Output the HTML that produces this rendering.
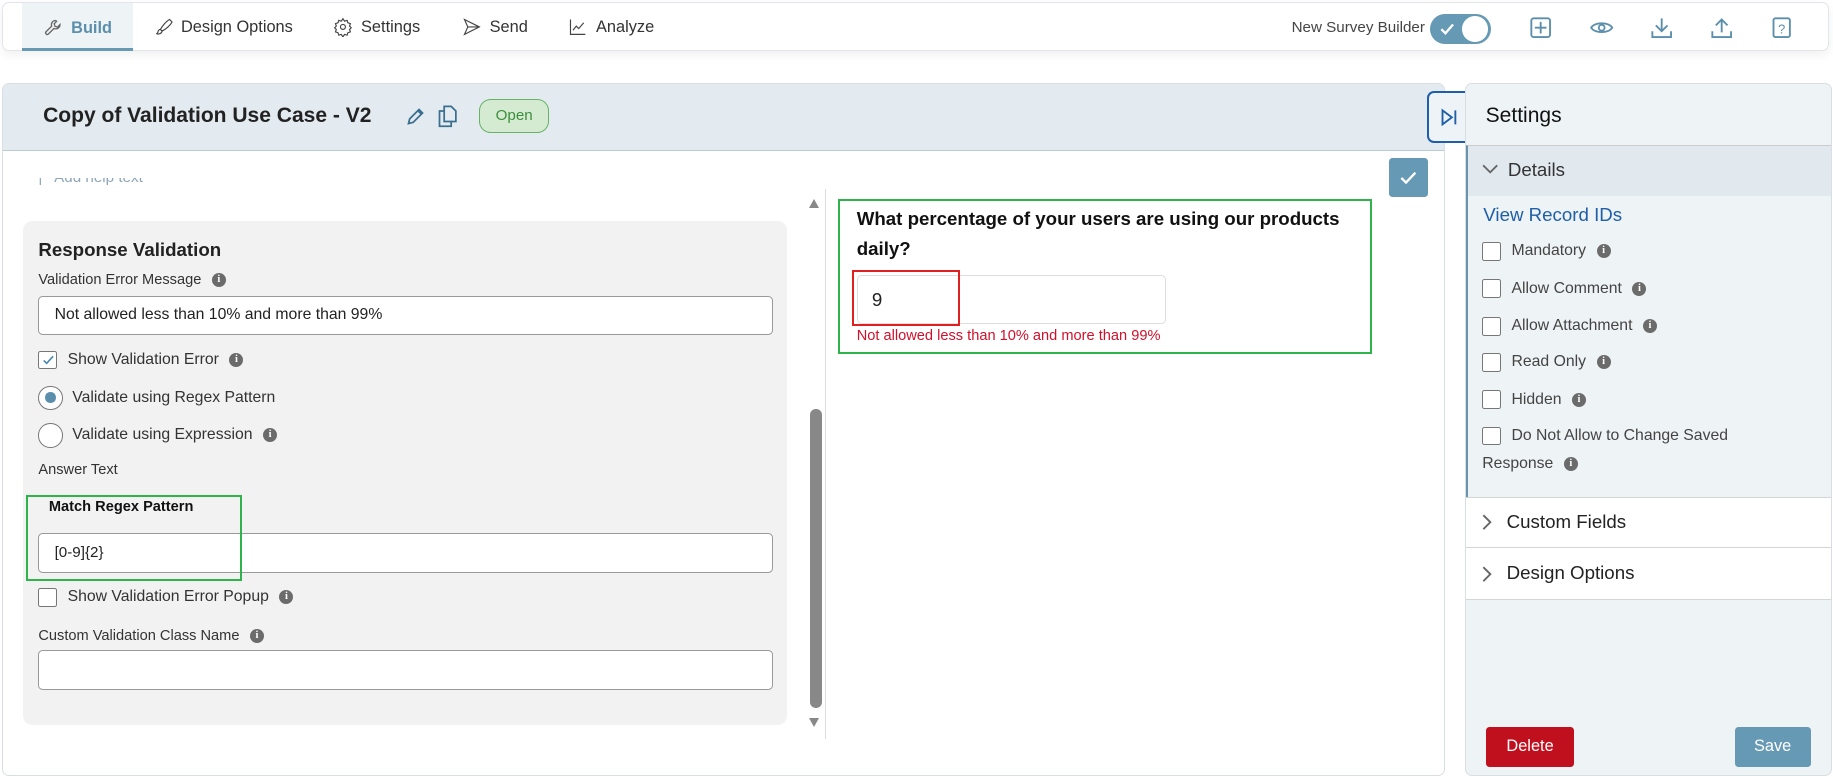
<!DOCTYPE html>
<html><head><meta charset="utf-8"><style>
*{box-sizing:border-box;margin:0;padding:0}
html,body{width:1833px;height:777px;overflow:hidden;background:#fff}
#w{zoom:1.16901;width:1568px;height:665px;position:relative;font-family:"Liberation Sans",sans-serif;color:#222}
.a{position:absolute}
.nav{left:2px;top:2px;width:1563px;height:42px;border:1px solid #e2e5ea;border-radius:6px;background:#fff;box-shadow:0 3px 8px rgba(0,0,0,.06)}
.tab{position:absolute;top:0;height:41px;display:flex;align-items:center;font-size:14px;color:#333;gap:7px}
.tab svg{width:17px;height:17px}
.ic{position:absolute;top:11px;width:20px;height:20px}
.info{display:inline-block;width:12px;height:12px;border-radius:50%;background:#6b6b6b;color:#fff;font-size:9px;font-weight:bold;text-align:center;line-height:12px;margin-left:9px;vertical-align:middle;font-family:"Liberation Serif",serif}
.cb{display:inline-block;width:16px;height:16px;border:1px solid #777;border-radius:2px;background:#fff;vertical-align:middle;margin-right:9px}
.inp{position:absolute;background:#fff;border:1px solid #999;border-radius:4px;font-size:13.5px;padding-left:13px;display:flex;align-items:center}
.lbl{position:absolute;font-size:12.5px;color:#333;display:flex;align-items:center}
.srow{position:absolute;left:1268px;font-size:13.5px;color:#444;display:flex;align-items:center}
</style></head><body><div id="w">
<div class="a nav">
  <div class="tab" style="left:16px;width:95px;padding-top:4px;background:#eef3f6;border-bottom:3px solid #6699b3;justify-content:center;color:#5b8fab;font-weight:bold">
    <svg viewBox="0 0 24 24" fill="none" stroke="#666" stroke-width="1.6"><path d="M15 3a5 5 0 0 0-4.5 6.8L3.6 16.7a2 2 0 0 0 2.8 2.8l6.9-6.9A5 5 0 0 0 20.5 8l-3 3-3-1-1-3 3-3A5 5 0 0 0 15 3z"/></svg>Build</div>
  <div class="tab" style="left:128px"><svg viewBox="0 0 24 24" fill="none" stroke="#444" stroke-width="1.4"><path d="M20 3c-4 2-9 8-11 12l2 2c4-2 10-7 12-11zM9 15c-2 0-3 2-3 3s-1 2-2 2c2 1 6 1 7-3z"/></svg>Design Options</div>
  <div class="tab" style="left:282px"><svg viewBox="0 0 24 24" fill="none" stroke="#444" stroke-width="1.4"><circle cx="12" cy="12" r="3"/><path d="M12 2l2 3 3-1 1 3 3 1-1 3 2 2-2 2 1 3-3 1-1 3-3-1-2 3-2-3-3 1-1-3-3-1 1-3-2-2 2-2-1-3 3-1 1-3 3 1z"/></svg>Settings</div>
  <div class="tab" style="left:392px"><svg viewBox="0 0 24 24" fill="none" stroke="#444" stroke-width="1.4"><path d="M3 3l18 9-18 9 4-9zM7 12h14"/></svg>Send</div>
  <div class="tab" style="left:483px"><svg viewBox="0 0 24 24" fill="none" stroke="#444" stroke-width="1.4"><path d="M3 3v18h18M6 16l4-5 3 3 6-7"/></svg>Analyze</div>
  <div class="a" style="left:1102px;top:13px;font-size:13px;color:#444">New Survey Builder</div>
  <div class="a" style="left:1220px;top:9px;width:53px;height:26px;border-radius:13px;background:#6699b3">
    <svg class="a" style="left:8px;top:6px" width="14" height="14" viewBox="0 0 14 14"><path d="M2 7l3.5 3.5L12 3" stroke="#fff" stroke-width="2" fill="none"/></svg>
    <div class="a" style="left:28px;top:2px;width:22px;height:22px;border-radius:50%;background:#fff"></div></div>
  <svg class="ic" style="left:1305px" viewBox="0 0 20 20" fill="none" stroke="#5b8fab" stroke-width="1.6"><rect x="2" y="2" width="16" height="16" rx="2"/><path d="M10 5v10M5 10h10"/></svg>
  <svg class="ic" style="left:1357px" viewBox="0 0 20 20" fill="none" stroke="#5b8fab" stroke-width="1.6"><path d="M1 10c3-5 15-5 18 0-3 5-15 5-18 0z"/><circle cx="10" cy="10" r="2.5"/></svg>
  <svg class="ic" style="left:1409px" viewBox="0 0 20 20" fill="none" stroke="#5b8fab" stroke-width="1.6"><path d="M10 2v11M5 8l5 5 5-5M2 13v5h16v-5"/></svg>
  <svg class="ic" style="left:1460px" viewBox="0 0 20 20" fill="none" stroke="#5b8fab" stroke-width="1.6"><path d="M10 14V3M5 8l5-5 5 5M2 13v5h16v-5"/></svg>
  <svg class="ic" style="left:1511px" viewBox="0 0 20 20" fill="none" stroke="#5b8fab" stroke-width="1.6"><rect x="3" y="2" width="14" height="16" rx="1.5"/><text x="10" y="15" font-size="11" text-anchor="middle" fill="#5b8fab" stroke="none" font-family="Liberation Sans">?</text></svg>
</div>

<div class="a" style="left:2px;top:71px;width:1234px;height:593px;border:1px solid #d9dee3;border-radius:6px;background:#fff;overflow:hidden">
  <div class="a" style="left:0;top:0;width:1234px;height:57px;background:#e3ebf1;border-bottom:1px solid #b8cbd8"></div>
  <div class="a" style="left:34px;top:17px;font-size:18px;font-weight:bold;color:#222">Copy of Validation Use Case - V2</div>
  <svg class="a" style="left:344px;top:19px" width="18" height="18" viewBox="0 0 18 18" fill="none" stroke="#3b6f8f" stroke-width="1.5"><path d="M3 15l1-4 8-8 3 3-8 8zM11 4l3 3"/></svg>
  <svg class="a" style="left:370px;top:17px" width="20" height="21" viewBox="0 0 20 21" fill="none" stroke="#3b6f8f" stroke-width="1.5"><path d="M7 2h6l4 4v9H7z"/><path d="M7 6H3v13h10v-4"/></svg>
  <div class="a" style="left:407px;top:13px;width:60px;height:29px;border:1px solid #67b267;border-radius:10px;background:#d4ebd2;color:#3c8e3c;font-size:13px;text-align:center;line-height:27px">Open</div>
  <div class="a" style="left:30px;top:80px;font-size:13px;color:#8fa7b8;height:8px;overflow:hidden;line-height:0">| &nbsp; Add help text</div>
  <div class="a" style="left:17px;top:117px;width:653px;height:431px;background:#f2f2f2;border-radius:8px">
    <div class="a" style="left:13px;top:16px;font-size:16px;font-weight:bold;color:#222">Response Validation</div>
    <div class="lbl" style="left:13px;top:44px">Validation Error Message<span class="info">i</span></div>
    <div class="inp" style="left:13px;top:64px;width:628px;height:34px">Not allowed less than 10% and more than 99%</div>
    <div class="lbl" style="left:13px;top:111px;font-size:13.5px"><span class="cb" style="position:relative"><svg class="a" style="left:2px;top:2px" width="11" height="11" viewBox="0 0 11 11"><path d="M1.5 5.5l2.5 2.5L9.5 2" stroke="#4a89b0" stroke-width="1.4" fill="none"/></svg></span>Show Validation Error<span class="info">i</span></div>
    <div class="lbl" style="left:13px;top:141px;font-size:13.5px"><span style="display:inline-block;width:21px;height:21px;border:1px solid #777;border-radius:50%;background:#fff;margin-right:8px;position:relative"><span class="a" style="left:5px;top:5px;width:9px;height:9px;border-radius:50%;background:#5b8fab"></span></span>Validate using Regex Pattern</div>
    <div class="lbl" style="left:13px;top:173px;font-size:13.5px"><span style="display:inline-block;width:21px;height:21px;border:1px solid #777;border-radius:50%;background:#fff;margin-right:8px"></span>Validate using Expression<span class="info">i</span></div>
    <div class="lbl" style="left:13px;top:206px">Answer Text</div>
    <div class="a" style="left:22px;top:238px;font-size:12.5px;font-weight:bold;color:#111">Match Regex Pattern</div>
    <div class="inp" style="left:13px;top:267px;width:628px;height:34px;font-size:13px">[0-9]{2}</div>
    <div class="a" style="left:2px;top:235px;width:185px;height:73px;border:2px solid #2fb34b"></div>
    <div class="lbl" style="left:13px;top:314px;font-size:13.5px"><span class="cb"></span>Show Validation Error Popup<span class="info">i</span></div>
    <div class="lbl" style="left:13px;top:348px">Custom Validation Class Name<span class="info">i</span></div>
    <div class="inp" style="left:13px;top:367px;width:628px;height:34px"></div>
  </div>
  <div class="a" style="left:689px;top:98px;width:0;height:0;border-left:5px solid transparent;border-right:5px solid transparent;border-bottom:8px solid #888"></div>
  <div class="a" style="left:690px;top:278px;width:10px;height:256px;background:#888;border-radius:5px"></div>
  <div class="a" style="left:689px;top:542px;width:0;height:0;border-left:5px solid transparent;border-right:5px solid transparent;border-top:8px solid #888"></div>
  <div class="a" style="left:703px;top:90px;width:1px;height:470px;background:#ddd"></div>
  <div class="a" style="left:1185px;top:63px;width:34px;height:34px;background:#6699b3;border-radius:3px"><svg class="a" style="left:9px;top:9px" width="16" height="16" viewBox="0 0 16 16"><path d="M2 8.5l4 4L14 4" stroke="#fff" stroke-width="2" fill="none"/></svg></div>
  <div class="a" style="left:714px;top:98px;width:457px;height:133px;border:2px solid #2fb34b"></div>
  <div class="a" style="left:730px;top:103px;width:440px;font-size:16px;font-weight:bold;line-height:25px;color:#111">What percentage of your users are using our products daily?</div>
  <div class="a" style="left:730px;top:163px;width:265px;height:42px;border:1px solid #ddd;border-radius:4px;background:#fff"></div>
  <div class="a" style="left:726px;top:159px;width:92px;height:48px;border:2px solid #e02020"></div>
  <div class="a" style="left:743px;top:175px;font-size:16px;color:#222">9</div>
  <div class="a" style="left:730px;top:209px;font-size:12.5px;color:#d0112b">Not allowed less than 10% and more than 99%</div>
</div>

<div class="a" style="left:1221px;top:78px;width:40px;height:44px;border:2px solid #1f5ea8;border-right:none;border-radius:6px 0 0 6px;background:#eef3f7"></div>
<svg class="a" style="left:1231px;top:92px" width="18" height="16" viewBox="0 0 18 16" fill="none" stroke="#1f5ea8" stroke-width="1.6"><path d="M3 2l8 6-8 6zM14 2v12"/></svg>

<div class="a" style="left:1253px;top:71px;width:314px;height:593px;border:1px solid #d9dee3;border-radius:6px;background:#eef3f6;overflow:hidden">
  <div class="a" style="left:17px;top:17px;font-size:18px;color:#111">Settings</div>
  <div class="a" style="left:0;top:52px;width:314px;height:44px;background:#e1e9ef;border-top:1px solid #ccc;border-left:2px solid #6a94ae"></div>
  <svg class="a" style="left:14px;top:68px" width="14" height="10" viewBox="0 0 14 10"><path d="M1 2l6 6 6-6" stroke="#666" stroke-width="1.6" fill="none"/></svg>
  <div class="a" style="left:36px;top:64px;font-size:16px;color:#333">Details</div>
  <div class="a" style="left:0;top:96px;width:2px;height:258px;background:#6a94ae"></div>
  <div class="a" style="left:15px;top:103px;font-size:16px;color:#1f5ea8">View Record IDs</div>
  <div class="a" style="left:0;top:353px;width:314px;height:44px;background:#fff;border-top:1px solid #d5d5d5;border-bottom:1px solid #d5d5d5"></div>
  <div class="a" style="left:0;top:397px;width:314px;height:44px;background:#fff;border-bottom:1px solid #d5d5d5"></div>
  <svg class="a" style="left:13px;top:368px" width="10" height="14" viewBox="0 0 10 14"><path d="M2 1l6 6-6 6" stroke="#666" stroke-width="1.6" fill="none"/></svg>
  <div class="a" style="left:35px;top:365px;font-size:16px;color:#222">Custom Fields</div>
  <svg class="a" style="left:13px;top:412px" width="10" height="14" viewBox="0 0 10 14"><path d="M2 1l6 6-6 6" stroke="#666" stroke-width="1.6" fill="none"/></svg>
  <div class="a" style="left:35px;top:409px;font-size:16px;color:#222">Design Options</div>
  <div class="a" style="left:17px;top:550px;width:76px;height:34px;background:#c0101e;border-radius:3px;color:#fff;font-size:14px;text-align:center;line-height:34px">Delete</div>
  <div class="a" style="left:230px;top:550px;width:65px;height:34px;background:#6699b3;border-radius:3px;color:#fff;font-size:14px;text-align:center;line-height:34px">Save</div>
</div>
<div class="srow" style="top:207px"><span class="cb"></span>Mandatory<span class="info">i</span></div>
<div class="srow" style="top:239px"><span class="cb"></span>Allow Comment<span class="info">i</span></div>
<div class="srow" style="top:271px"><span class="cb"></span>Allow Attachment<span class="info">i</span></div>
<div class="srow" style="top:302px"><span class="cb"></span>Read Only<span class="info">i</span></div>
<div class="srow" style="top:334px"><span class="cb"></span>Hidden<span class="info">i</span></div>
<div class="srow" style="top:365px"><span class="cb"></span>Do Not Allow to Change Saved</div>
<div class="srow" style="top:389px">Response<span class="info">i</span></div>
</div></body></html>
